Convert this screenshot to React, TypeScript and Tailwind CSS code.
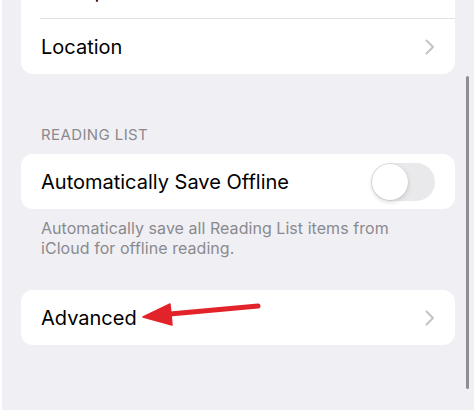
import React from "react";

const font = { fontFamily: "Inter, 'Liberation Sans', sans-serif" };

function Chevron() {
  return (
    <svg width="10" height="16" viewBox="0 0 10 16" fill="none" className="shrink-0">
      <path d="M1.5 1.5 L8 8 L1.5 14.5" stroke="#c4c4c7" strokeWidth="2" strokeLinecap="round" strokeLinejoin="round" />
    </svg>
  );
}

function Toggle() {
  return (
    <div className="relative h-[38px] w-[64px] rounded-full bg-[#e9e9eb] shrink-0">
      <div className="absolute left-[1px] top-[1px] h-[36px] w-[36px] rounded-full bg-white shadow-[0_2px_5px_rgba(0,0,0,0.15),0_0_0_0.5px_rgba(0,0,0,0.08)]" />
    </div>
  );
}

function Arrow() {
  return (
    <svg className="absolute left-[140px] top-[300px]" width="126" height="30" viewBox="140 300 126 30">
      <path d="M170 314 L258 306" stroke="#e3232a" strokeWidth="5" strokeLinecap="round" />
      <path d="M143 317 L170 304 L172 325 Z" fill="#e3232a" stroke="#e3232a" strokeWidth="1.5" strokeLinejoin="round" />
    </svg>
  );
}

export default function App() {
  return (
    <div className="relative flex h-[413px] w-[474px] flex-col overflow-hidden bg-white" style={font}>
      <div className="ml-[2px] flex h-[410px] flex-col overflow-hidden bg-[#f0eff4] pl-[19px] pr-[19px]">
        <div className="mt-[-37px] rounded-[12px] bg-white">
          <div className="flex h-[55px] items-center pl-[20px] pr-[22px] text-[20px] text-black">Microphone</div>
          <div className="ml-[19px] h-px bg-[#e1e1e4]" />
          <div className="flex h-[55px] items-center justify-between pl-[20px] pr-[20px] text-[20px] text-black">
            <span>Location</span>
            <Chevron />
          </div>
        </div>

        <div className="mt-[51px] pl-[20px] text-[15px] uppercase leading-[20px] tracking-[0.4px] text-[#8a8a8e]">Reading List</div>

        <div className="mt-[9px] flex h-[55px] items-center justify-between rounded-[12px] bg-white pl-[20px] pr-[20px]">
          <span className="text-[20px] text-black">Automatically Save Offline</span>
          <Toggle />
        </div>

        <div className="mt-[9px] pl-[20px] pr-[20px] text-[16px] leading-[20px] tracking-[0.05px] text-[#8a8a8e]">
          Automatically save all Reading List items from iCloud for offline reading.
        </div>

        <div className="mt-[32px] flex h-[55px] items-center justify-between rounded-[12px] bg-white pl-[20px] pr-[20px]">
          <span className="text-[20px] text-black">Advanced</span>
          <Chevron />
        </div>
      </div>

      {/* scroll indicator */}
      <div className="absolute left-[466px] top-[76px] h-[313px] w-[3px] rounded-full bg-[#8f8f93]" />
      <Arrow />
    </div>
  );
}
